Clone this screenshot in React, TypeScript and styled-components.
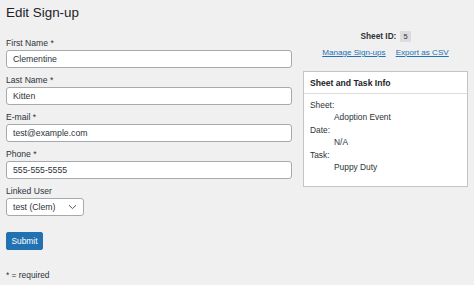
import React from "react";
import styled, { createGlobalStyle } from "styled-components";

const Global = createGlobalStyle`
  html, body { margin: 0; padding: 0; background: #f0f0f1; }
  body { font-family: "Liberation Sans", Arial, sans-serif; color: #1d2327; }
  * { box-sizing: border-box; }
`;

const Page = styled.div`
  display: flex;
  align-items: flex-start;
  gap: 11px;
  padding: 4px 6px 0 6px;
  width: 474px;
  height: 285px;
  overflow: hidden;
`;

const Main = styled.div`
  width: 286px;
  display: flex;
  flex-direction: column;
`;

const Title = styled.h1`
  margin: 0 0 16px 0;
  font-size: 13.4px;
  line-height: 18px;
  font-weight: 400;
  color: #1d2327;
`;

const Field = styled.div`
  display: flex;
  flex-direction: column;
  margin-bottom: 7px;
`;

const Label = styled.label`
  font-size: 8.6px;
  line-height: 11px;
  margin-bottom: 1px;
  color: #2c3338;
`;

const Input = styled.input`
  width: 100%;
  height: 18px;
  border: 1px solid #a7aaad;
  border-radius: 3px;
  background: #fff;
  padding: 0 6px;
  font-family: "Liberation Sans", Arial, sans-serif;
  font-size: 8.7px;
  color: #2c3338;
  outline: none;
`;

const SelectBox = styled.div`
  width: 78px;
  height: 18px;
  border: 1px solid #a7aaad;
  border-radius: 3px;
  background: #fff;
  display: flex;
  align-items: center;
  justify-content: space-between;
  padding: 0 6px;
  font-size: 8.7px;
  color: #2c3338;
`;

const SubmitButton = styled.button`
  margin-top: 9px;
  align-self: flex-start;
  width: 37px;
  height: 18px;
  border: 1px solid #2271b1;
  border-radius: 2px;
  background: #2271b1;
  color: #fff;
  font-family: "Liberation Sans", Arial, sans-serif;
  font-size: 8.4px;
  padding: 0;
`;

const Note = styled.p`
  margin: 20px 0 0 0;
  font-size: 8.4px;
  line-height: 11px;
  color: #2c3338;
`;

const Side = styled.div`
  width: 165px;
  display: flex;
  flex-direction: column;
  align-items: center;
  padding-top: 27px;
`;

const SheetId = styled.div`
  display: flex;
  align-items: center;
  gap: 4px;
  font-size: 8.3px;
  font-weight: 700;
  line-height: 11px;
  color: #2c3338;
`;

const Badge = styled.code`
  font-family: "Liberation Sans", Arial, sans-serif;
  font-weight: 400;
  font-size: 7.5px;
  background: #dcdcde;
  padding: 1px 3px;
  line-height: 9px;
`;

const Links = styled.div`
  display: flex;
  gap: 10px;
  margin-top: 5px;
  font-size: 8.1px;
  line-height: 11px;
`;

const Link = styled.a`
  color: #2271b1;
  text-decoration: underline;
`;

const Box = styled.div`
  margin-top: 13px;
  width: 165px;
  height: 116px;
  background: #fff;
  border: 1px solid #c3c4c7;
`;

const BoxHeader = styled.div`
  height: 22px;
  padding: 0 6px;
  display: flex;
  align-items: center;
  border-bottom: 1px solid #dcdcde;
  font-size: 8.6px;
  font-weight: 700;
  color: #1d2327;
`;

const InfoList = styled.dl`
  margin: 0;
  padding: 5px 6px 0 6px;
  font-size: 8.4px;
  line-height: 12.4px;
  color: #2c3338;
`;

const Term = styled.dt`
  margin: 0;
`;

const Desc = styled.dd`
  margin: 0 0 0 24px;
`;

const Chevron = () => (
  <svg width="9" height="6" viewBox="0 0 9 6">
    <path d="M1 1.2 L4.5 4.6 L8 1.2" fill="none" stroke="#50575e" strokeWidth="1" />
  </svg>
);

const fields = [
  { label: "First Name *", value: "Clementine" },
  { label: "Last Name *", value: "Kitten" },
  { label: "E-mail *", value: "test@example.com" },
  { label: "Phone *", value: "555-555-5555" },
];

export default function App() {
  return (
    <>
      <Global />
      <Page>
        <Main>
          <Title>Edit Sign-up</Title>
          {fields.map((f) => (
            <Field key={f.label}>
              <Label>{f.label}</Label>
              <Input defaultValue={f.value} />
            </Field>
          ))}
          <Field>
            <Label>Linked User</Label>
            <SelectBox>
              <span>test (Clem)</span>
              <Chevron />
            </SelectBox>
          </Field>
          <SubmitButton>Submit</SubmitButton>
          <Note>* = required</Note>
        </Main>
        <Side>
          <SheetId>
            Sheet ID: <Badge>5</Badge>
          </SheetId>
          <Links>
            <Link href="#">Manage Sign-ups</Link>
            <Link href="#">Export as CSV</Link>
          </Links>
          <Box>
            <BoxHeader>Sheet and Task Info</BoxHeader>
            <InfoList>
              <Term>Sheet:</Term>
              <Desc>Adoption Event</Desc>
              <Term>Date:</Term>
              <Desc>N/A</Desc>
              <Term>Task:</Term>
              <Desc>Puppy Duty</Desc>
            </InfoList>
          </Box>
        </Side>
      </Page>
    </>
  );
}
